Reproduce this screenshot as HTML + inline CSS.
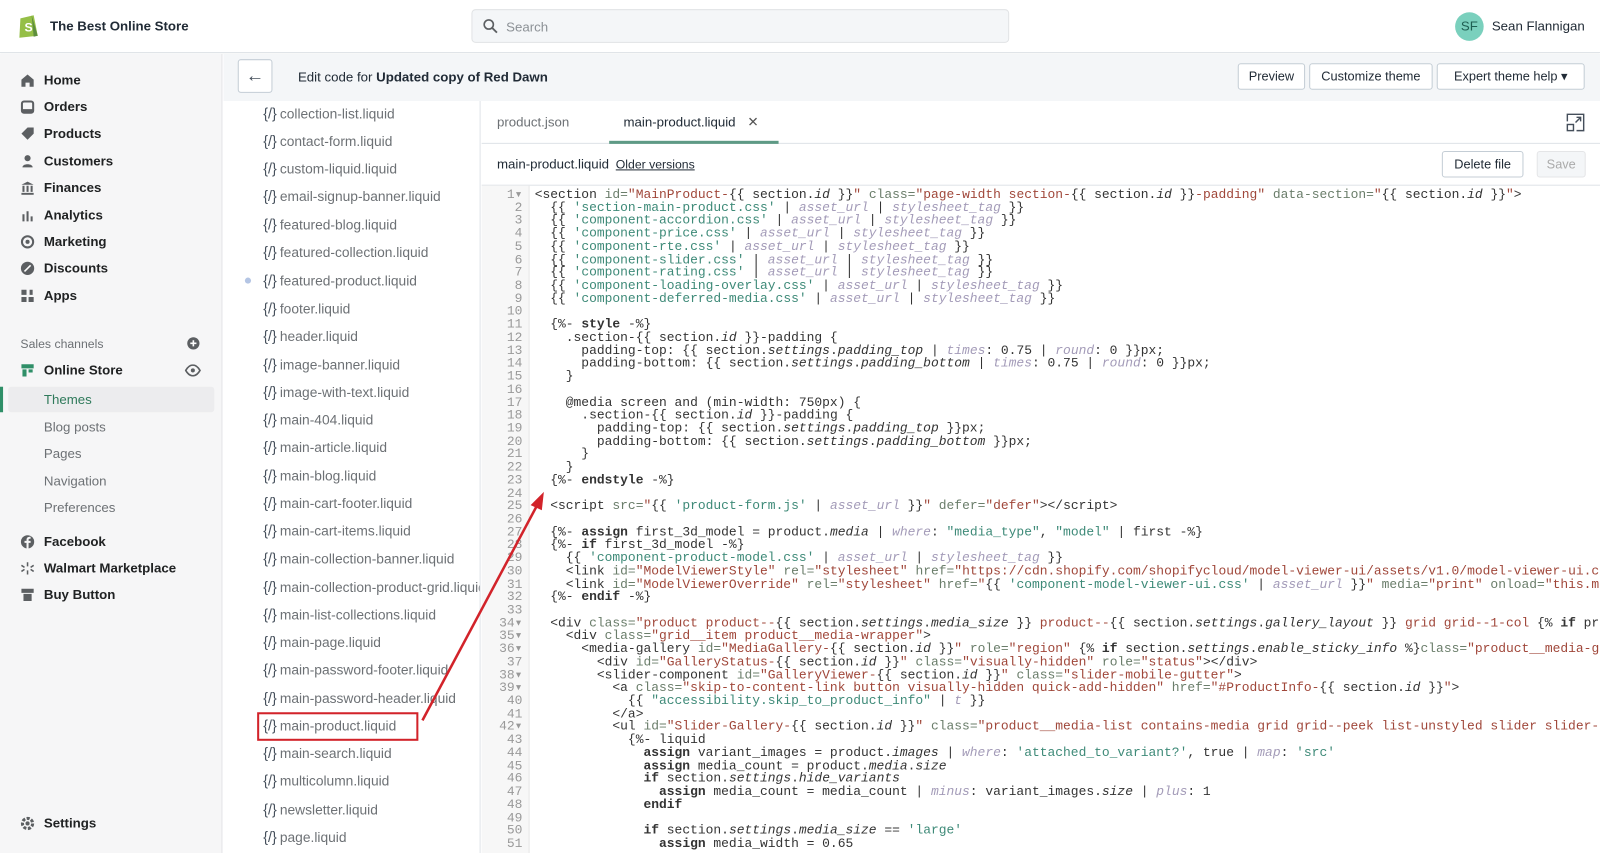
<!DOCTYPE html>
<html><head><meta charset="utf-8"><style>
*{box-sizing:border-box;margin:0;padding:0}
body{width:1600px;height:853px;overflow:hidden;font-family:"Liberation Sans",sans-serif;background:#fff;position:relative;color:#212b36}
.wrap{position:absolute;left:0;top:0;width:1568px;height:836px;transform:scale(1.020408);transform-origin:0 0;overflow:hidden}
.top{position:absolute;left:0;top:0;width:1568px;height:52px;background:#fff;border-bottom:1px solid #dfe3e8;box-shadow:0 1px 2px rgba(0,0,0,.06)}
.logo{position:absolute;left:17px;top:12px}
.store{position:absolute;left:49px;top:18px;font-size:13px;font-weight:bold;color:#212b36}
.search{position:absolute;left:462px;top:9px;width:527px;height:33px;background:#f4f6f8;border:1px solid #e1e3e5;border-radius:4px}
.search span{position:absolute;left:33px;top:9px;font-size:13px;color:#8c9196}
.av{position:absolute;left:1426px;top:12px;width:28px;height:28px;border-radius:50%;background:#7ad0bd;color:#1e5f52;font-size:13px;text-align:center;line-height:28px}
.uname{position:absolute;left:1462px;top:18px;font-size:13px}
.side{position:absolute;left:0;top:53px;width:218px;height:800px;background:#f6f6f7;border-right:1px solid #e4e5e7}
.ni{position:absolute;left:43px;font-size:13px;color:#202223;font-weight:bold}
.ic{position:absolute;left:20px;width:14px;height:14px}
.sub{position:absolute;left:43px;font-size:13px;color:#6d7175}
.hdr{position:absolute;left:219px;top:53px;width:1381px;height:46px;background:#f4f6f8}
.back{position:absolute;left:233px;top:58px;width:34px;height:33px;border:1px solid #c4cdd5;background:#fff;border-radius:3px;text-align:center;line-height:30px;font-size:18px;color:#454f5b}
.ttl{position:absolute;left:292px;top:68px;font-size:13px;color:#212b36}
.btn{position:absolute;top:62px;height:26px;border:1px solid #c4cdd5;background:#fff;border-radius:3px;font-size:12.5px;color:#212b36;line-height:24px;text-align:center}
.files{position:absolute;left:219px;top:99px;width:252px;height:754px;background:#fff;border-right:1px solid #dfe3e8;overflow:hidden}
.f{position:absolute;left:39px;font-size:13.5px;color:#6d7175;white-space:nowrap}
.f b{font-weight:normal;color:#454f5b;font-size:14px;margin-right:3px}
.tabs{position:absolute;left:472px;top:99px;width:1128px;height:42px;border-bottom:1px solid #dfe3e8;background:#fff}
.fh{position:absolute;left:472px;top:141px;width:1128px;height:41px;border-bottom:1px solid #dfe3e8}
.gut{position:absolute;left:472px;top:182px;width:47px;height:671px;background:#f7f7f7;border-right:1px solid #e6e6e6}
pre{font-family:"Liberation Mono",monospace;font-size:12.7px;line-height:12.72px;position:absolute;white-space:pre;color:#333}
.ln{left:472px;top:185px;width:40px;text-align:right;color:#999}
.code{left:524px;top:185px}
.s{color:#a0473a}.q{color:#3e8a78}.f2{color:#a39bb8;font-style:italic}.k{font-weight:bold}.a{color:#6a7d6a}.i{font-style:italic}
</style></head><body><div class="wrap">
<div class="top">
<svg class="logo" width="22" height="26" viewBox="0 0 22 26"><path d="M3 6 L16 3 L20 23 L2 25 Z" fill="#95bf47"/><path d="M14 3 L20 23 L16 24 Z" fill="#5e8e3e"/><text x="7" y="19" font-size="12" font-weight="bold" fill="#fff" font-family="Liberation Sans">S</text></svg>
<div class="store">The Best Online Store</div>
<div class="search"><svg style="position:absolute;left:10px;top:8px" width="15" height="15" viewBox="0 0 15 15"><circle cx="6" cy="6" r="4.5" stroke="#5c5f62" stroke-width="1.6" fill="none"/><path d="M9.5 9.5L14 14" stroke="#5c5f62" stroke-width="1.8"/></svg><span>Search</span></div>
<div class="av">SF</div><div class="uname">Sean Flannigan</div>
</div>
<div class="side">
<svg class="ic" style="top:19px" viewBox="0 0 14 14"><path d="M7 1L1 6v7h4V9h4v4h4V6z" fill="#5c5f62"/></svg><div class="ni" style="top:18px">Home</div>
<svg class="ic" style="top:45px" viewBox="0 0 14 14"><rect x="1.5" y="1.5" width="11" height="11" rx="2" stroke="#5c5f62" stroke-width="2" fill="none"/><path d="M2 9h10v3H2z" fill="#5c5f62"/></svg><div class="ni" style="top:44px">Orders</div>
<svg class="ic" style="top:71px" viewBox="0 0 14 14"><path d="M7 1h6v6l-6 6-6-6z" fill="#5c5f62"/></svg><div class="ni" style="top:70px">Products</div>
<svg class="ic" style="top:98px" viewBox="0 0 14 14"><circle cx="7" cy="4" r="3" fill="#5c5f62"/><path d="M2 13c0-4 10-4 10 0z" fill="#5c5f62"/></svg><div class="ni" style="top:97px">Customers</div>
<svg class="ic" style="top:124px" viewBox="0 0 14 14"><path d="M7 1L1 4h12zM2 5h2v6H2zM6 5h2v6H6zM10 5h2v6h-2zM1 12h12v2H1z" fill="#5c5f62"/></svg><div class="ni" style="top:123px">Finances</div>
<svg class="ic" style="top:151px" viewBox="0 0 14 14"><path d="M2 6h2v7H2zM6 3h2v10H6zM10 8h2v5h-2z" fill="#5c5f62"/></svg><div class="ni" style="top:150px">Analytics</div>
<svg class="ic" style="top:177px" viewBox="0 0 14 14"><circle cx="7" cy="7" r="5.5" stroke="#5c5f62" stroke-width="2" fill="none"/><circle cx="7" cy="7" r="2" fill="#5c5f62"/></svg><div class="ni" style="top:176px">Marketing</div>
<svg class="ic" style="top:203px" viewBox="0 0 14 14"><circle cx="7" cy="7" r="6.5" fill="#5c5f62"/><path d="M4 10L10 4" stroke="#fff" stroke-width="1.5"/></svg><div class="ni" style="top:202px">Discounts</div>
<svg class="ic" style="top:230px" viewBox="0 0 14 14"><path d="M1 1h5v5H1zM8 8h5v5H8zM1 8h5v5H1zM9 1h3v5H9z" fill="#5c5f62"/></svg><div class="ni" style="top:229px">Apps</div>
<div style="position:absolute;left:20px;top:277px;font-size:12px;color:#6d7175">Sales channels</div>
<svg style="position:absolute;left:183px;top:277px" width="13" height="13"><circle cx="6.5" cy="6.5" r="6" fill="#5c5f62"/><path d="M6.5 3.5v6M3.5 6.5h6" stroke="#fff" stroke-width="1.6"/></svg>
<svg class="ic" style="top:303px" viewBox="0 0 14 14"><path d="M1 1h12v4H1zM2 6h4v7H2zM8 6h4v3H8z" fill="#2f8f68"/></svg><div class="ni" style="top:302px">Online Store</div>
<svg style="position:absolute;left:181px;top:304px" width="16" height="12"><path d="M1 6c4-7 10-7 14 0c-4 7-10 7-14 0z" stroke="#5c5f62" stroke-width="1.6" fill="none"/><circle cx="8" cy="6" r="2" fill="#5c5f62"/></svg>
<div style="position:absolute;left:8px;top:326px;width:202px;height:25px;background:#ececee;border-radius:3px"></div>
<div style="position:absolute;left:0;top:326px;width:3px;height:25px;background:#2f8f68"></div>
<div class="sub" style="top:331px;color:#2f7a5b">Themes</div>
<div class="sub" style="top:358px">Blog posts</div>
<div class="sub" style="top:384px">Pages</div>
<div class="sub" style="top:411px">Navigation</div>
<div class="sub" style="top:437px">Preferences</div>
<svg class="ic" style="top:471px" viewBox="0 0 14 14"><circle cx="7" cy="7" r="6.5" fill="#5c5f62"/><path d="M8 14V8h2V6H8V5c0-1 1-1 2-1V2C7 2 6 3 6 5v1H4v2h2v6z" fill="#f6f6f7"/></svg><div class="ni" style="top:470px">Facebook</div>
<svg class="ic" style="top:497px" viewBox="0 0 14 14"><path d="M7 1v4M7 9v4M1 4l3 2M10 8l3 2M1 10l3-2M10 6l3-2" stroke="#5c5f62" stroke-width="1.5"/></svg><div class="ni" style="top:496px">Walmart Marketplace</div>
<svg class="ic" style="top:523px" viewBox="0 0 14 14"><path d="M1 1h12v4H1zM3 6h8v7H3z" fill="#5c5f62"/></svg><div class="ni" style="top:522px">Buy Button</div>
<svg class="ic" style="top:747px" viewBox="0 0 14 14"><circle cx="7" cy="7" r="5" stroke="#5c5f62" stroke-width="3" fill="none" stroke-dasharray="3 1.5"/><circle cx="7" cy="7" r="2" fill="#5c5f62"/></svg><div class="ni" style="top:746px">Settings</div>
</div>
<div class="hdr"></div>
<div class="back">←</div>
<div class="ttl">Edit code for <b>Updated copy of Red Dawn</b></div>
<div class="btn" style="left:1213px;width:66px">Preview</div>
<div class="btn" style="left:1283px;width:121px">Customize theme</div>
<div class="btn" style="left:1408px;width:145px">Expert theme help ▾</div>
<div class="files">
<div class="f" style="top:4px"><b>{/}</b>collection-list.liquid</div>
<div class="f" style="top:31px"><b>{/}</b>contact-form.liquid</div>
<div class="f" style="top:58px"><b>{/}</b>custom-liquid.liquid</div>
<div class="f" style="top:85px"><b>{/}</b>email-signup-banner.liquid</div>
<div class="f" style="top:113px"><b>{/}</b>featured-blog.liquid</div>
<div class="f" style="top:140px"><b>{/}</b>featured-collection.liquid</div>
<div style="position:absolute;left:21px;top:173px;width:6px;height:6px;border-radius:50%;background:#b4c5e4"></div>
<div class="f" style="top:168px"><b>{/}</b>featured-product.liquid</div>
<div class="f" style="top:195px"><b>{/}</b>footer.liquid</div>
<div class="f" style="top:222px"><b>{/}</b>header.liquid</div>
<div class="f" style="top:250px"><b>{/}</b>image-banner.liquid</div>
<div class="f" style="top:277px"><b>{/}</b>image-with-text.liquid</div>
<div class="f" style="top:304px"><b>{/}</b>main-404.liquid</div>
<div class="f" style="top:331px"><b>{/}</b>main-article.liquid</div>
<div class="f" style="top:359px"><b>{/}</b>main-blog.liquid</div>
<div class="f" style="top:386px"><b>{/}</b>main-cart-footer.liquid</div>
<div class="f" style="top:413px"><b>{/}</b>main-cart-items.liquid</div>
<div class="f" style="top:440px"><b>{/}</b>main-collection-banner.liquid</div>
<div class="f" style="top:468px"><b>{/}</b>main-collection-product-grid.liquid</div>
<div class="f" style="top:495px"><b>{/}</b>main-list-collections.liquid</div>
<div class="f" style="top:522px"><b>{/}</b>main-page.liquid</div>
<div class="f" style="top:549px"><b>{/}</b>main-password-footer.liquid</div>
<div class="f" style="top:577px"><b>{/}</b>main-password-header.liquid</div>
<div class="f" style="top:604px"><b>{/}</b>main-product.liquid</div>
<div class="f" style="top:631px"><b>{/}</b>main-search.liquid</div>
<div class="f" style="top:658px"><b>{/}</b>multicolumn.liquid</div>
<div class="f" style="top:686px"><b>{/}</b>newsletter.liquid</div>
<div class="f" style="top:713px"><b>{/}</b>page.liquid</div>
</div>
<div class="tabs">
<div style="position:absolute;left:15px;top:13px;font-size:13px;color:#6d7175">product.json</div>
<div style="position:absolute;left:139px;top:13px;font-size:13px;color:#212b36">main-product.liquid <span style="margin-left:8px;color:#555">✕</span></div>
<div style="position:absolute;left:125px;top:39px;width:166px;height:3px;background:#5e9a85"></div>
<svg style="position:absolute;left:1063px;top:12px" width="18" height="18" viewBox="0 0 18 18"><path d="M1 8V1h16v16h-7" stroke="#454f5b" stroke-width="1.4" fill="none"/><rect x="1" y="11" width="6" height="6" stroke="#454f5b" stroke-width="1.4" fill="none"/><path d="M9 9l5-5M10 4h4v4" stroke="#454f5b" stroke-width="1.4" fill="none"/></svg>
</div>
<div class="fh">
<div style="position:absolute;left:15px;top:12px;font-size:13px;color:#212b36">main-product.liquid <span style="font-size:12px;text-decoration:underline;margin-left:3px">Older versions</span></div>
<div class="btn" style="left:941px;top:7px;width:80px">Delete file</div>
<div class="btn" style="left:1034px;top:7px;width:48px;background:#f4f6f8;border-color:#e4e5e7;color:#aaa">Save</div>
</div>
<div class="gut"></div>
<pre class="ln">1▾
2
3
4
5
6
7
8
9
10
11
12
13
14
15
16
17
18
19
20
21
22
23
24
25
26
27
28
29
30
31
32
33
34▾
35▾
36▾
37
38▾
39▾
40
41
42▾
43
44
45
46
47
48
49
50
51</pre>
<pre class="code">&lt;section <span class="a">id=</span><span class="s">"MainProduct-</span>{{ section.<span class="i">id</span> }}<span class="s">"</span> <span class="a">class=</span><span class="s">"page-width section-</span>{{ section.<span class="i">id</span> }}<span class="s">-padding"</span> <span class="a">data-section=</span><span class="s">"</span>{{ section.<span class="i">id</span> }}<span class="s">"</span>&gt;
  {{ <span class="q">'section-main-product.css'</span> | <span class="f2">asset_url</span> | <span class="f2">stylesheet_tag</span> }}
  {{ <span class="q">'component-accordion.css'</span> | <span class="f2">asset_url</span> | <span class="f2">stylesheet_tag</span> }}
  {{ <span class="q">'component-price.css'</span> | <span class="f2">asset_url</span> | <span class="f2">stylesheet_tag</span> }}
  {{ <span class="q">'component-rte.css'</span> | <span class="f2">asset_url</span> | <span class="f2">stylesheet_tag</span> }}
  {{ <span class="q">'component-slider.css'</span> | <span class="f2">asset_url</span> | <span class="f2">stylesheet_tag</span> }}
  {{ <span class="q">'component-rating.css'</span> | <span class="f2">asset_url</span> | <span class="f2">stylesheet_tag</span> }}
  {{ <span class="q">'component-loading-overlay.css'</span> | <span class="f2">asset_url</span> | <span class="f2">stylesheet_tag</span> }}
  {{ <span class="q">'component-deferred-media.css'</span> | <span class="f2">asset_url</span> | <span class="f2">stylesheet_tag</span> }}

  {%- <span class="k">style</span> -%}
    .section-{{ section.<span class="i">id</span> }}-padding {
      padding-top: {{ section.<span class="i">settings</span>.<span class="i">padding_top</span> | <span class="f2">times</span>: 0.75 | <span class="f2">round</span>: 0 }}px;
      padding-bottom: {{ section.<span class="i">settings</span>.<span class="i">padding_bottom</span> | <span class="f2">times</span>: 0.75 | <span class="f2">round</span>: 0 }}px;
    }

    @media screen and (min-width: 750px) {
      .section-{{ section.<span class="i">id</span> }}-padding {
        padding-top: {{ section.<span class="i">settings</span>.<span class="i">padding_top</span> }}px;
        padding-bottom: {{ section.<span class="i">settings</span>.<span class="i">padding_bottom</span> }}px;
      }
    }
  {%- <span class="k">endstyle</span> -%}

  &lt;script <span class="a">src=</span><span class="s">"</span>{{ <span class="q">'product-form.js'</span> | <span class="f2">asset_url</span> }}<span class="s">"</span> <span class="a">defer=</span><span class="s">"defer"</span>&gt;&lt;/script&gt;

  {%- <span class="k">assign</span> first_3d_model = product.<span class="i">media</span> | <span class="f2">where</span>: <span class="q">"media_type"</span>, <span class="q">"model"</span> | first -%}
  {%- <span class="k">if</span> first_3d_model -%}
    {{ <span class="q">'component-product-model.css'</span> | <span class="f2">asset_url</span> | <span class="f2">stylesheet_tag</span> }}
    &lt;link <span class="a">id=</span><span class="s">"ModelViewerStyle"</span> <span class="a">rel=</span><span class="s">"stylesheet"</span> <span class="a">href=</span><span class="s">"https://cdn.shopify.com/shopifycloud/model-viewer-ui/assets/v1.0/model-viewer-ui.css"</span>
    &lt;link <span class="a">id=</span><span class="s">"ModelViewerOverride"</span> <span class="a">rel=</span><span class="s">"stylesheet"</span> <span class="a">href=</span><span class="s">"</span>{{ <span class="q">'component-model-viewer-ui.css'</span> | <span class="f2">asset_url</span> }}<span class="s">"</span> <span class="a">media=</span><span class="s">"print"</span> <span class="a">onload=</span><span class="s">"this.media='all'"</span>
  {%- <span class="k">endif</span> -%}

  &lt;div <span class="a">class=</span><span class="s">"product product--</span>{{ section.<span class="i">settings</span>.<span class="i">media_size</span> }}<span class="s"> product--</span>{{ section.<span class="i">settings</span>.<span class="i">gallery_layout</span> }}<span class="s"> grid grid--1-col </span>{% <span class="k">if</span> product.media.size &gt; 0 %}
    &lt;div <span class="a">class=</span><span class="s">"grid__item product__media-wrapper"</span>&gt;
      &lt;media-gallery <span class="a">id=</span><span class="s">"MediaGallery-</span>{{ section.<span class="i">id</span> }}<span class="s">"</span> <span class="a">role=</span><span class="s">"region"</span> {% <span class="k">if</span> section.<span class="i">settings</span>.<span class="i">enable_sticky_info</span> %}<span class="a">class=</span><span class="s">"product__media-gallery"</span>
        &lt;div <span class="a">id=</span><span class="s">"GalleryStatus-</span>{{ section.<span class="i">id</span> }}<span class="s">"</span> <span class="a">class=</span><span class="s">"visually-hidden"</span> <span class="a">role=</span><span class="s">"status"</span>&gt;&lt;/div&gt;
        &lt;slider-component <span class="a">id=</span><span class="s">"GalleryViewer-</span>{{ section.<span class="i">id</span> }}<span class="s">"</span> <span class="a">class=</span><span class="s">"slider-mobile-gutter"</span>&gt;
          &lt;a <span class="a">class=</span><span class="s">"skip-to-content-link button visually-hidden quick-add-hidden"</span> <span class="a">href=</span><span class="s">"#ProductInfo-</span>{{ section.<span class="i">id</span> }}<span class="s">"</span>&gt;
            {{ <span class="q">"accessibility.skip_to_product_info"</span> | <span class="f2">t</span> }}
          &lt;/a&gt;
          &lt;ul <span class="a">id=</span><span class="s">"Slider-Gallery-</span>{{ section.<span class="i">id</span> }}<span class="s">"</span> <span class="a">class=</span><span class="s">"product__media-list contains-media grid grid--peek list-unstyled slider slider--mobile"</span>
            {%- liquid
              <span class="k">assign</span> variant_images = product.<span class="i">images</span> | <span class="f2">where</span>: <span class="q">'attached_to_variant?'</span>, true | <span class="f2">map</span>: <span class="q">'src'</span>
              <span class="k">assign</span> media_count = product.<span class="i">media</span>.<span class="i">size</span>
              <span class="k">if</span> section.<span class="i">settings</span>.<span class="i">hide_variants</span>
                <span class="k">assign</span> media_count = media_count | <span class="f2">minus</span>: variant_images.<span class="i">size</span> | <span class="f2">plus</span>: 1
              <span class="k">endif</span>

              <span class="k">if</span> section.<span class="i">settings</span>.<span class="i">media_size</span> == <span class="q">'large'</span>
                <span class="k">assign</span> media_width = 0.65</pre>
<div style="position:absolute;left:252px;top:698px;width:158px;height:28px;border:2.5px solid #d2232a"></div>
<svg style="position:absolute;left:0;top:0" width="1568" height="836"><path d="M414 706L527 494" stroke="#d2232a" stroke-width="2.5"/><path d="M533 482L520 495L531 500Z" fill="#d2232a"/></svg>
</div></body></html>
